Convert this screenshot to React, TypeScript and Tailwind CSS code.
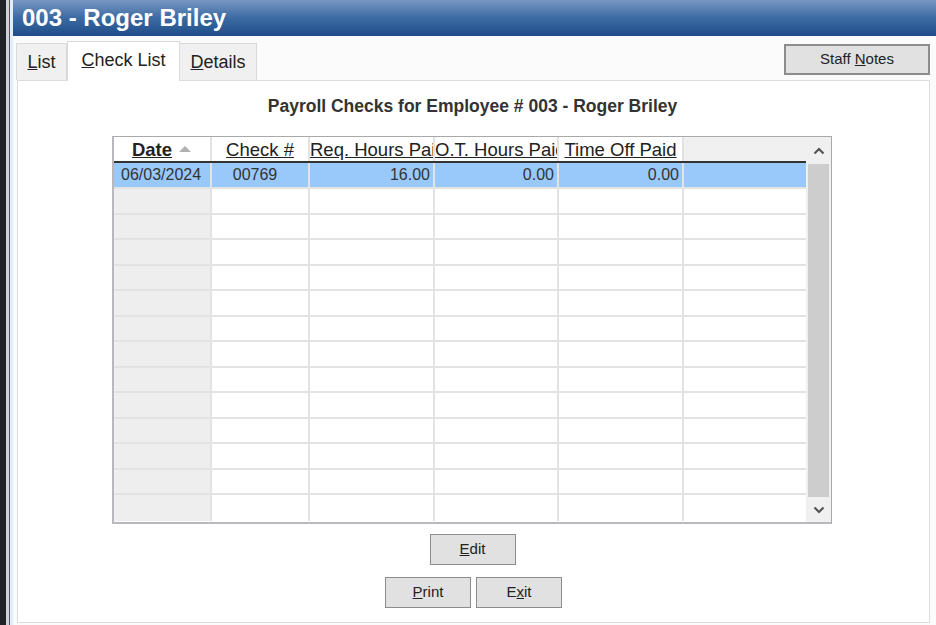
import React from 'react';

const cols = [
  { key: 'date', label: 'Date', w: 'w-[98px]', bold: true, sort: true },
  { key: 'check', label: 'Check #', w: 'w-[98px]' },
  { key: 'req', label: 'Req. Hours Paid', w: 'w-[125px]' },
  { key: 'ot', label: 'O.T. Hours Paid', w: 'w-[124px]' },
  { key: 'off', label: 'Time Off Paid', w: 'w-[125px]' },
];

const emptyRows = Array.from({ length: 13 });

function Btn({ children, className = '' }: { children: React.ReactNode; className?: string }) {
  return (
    <button
      className={`h-[31px] w-[86px] bg-[#e1e1e1] border border-[#8c8c8c] text-[15px] text-[#222] ${className}`}
    >
      {children}
    </button>
  );
}

export default function App() {
  return (
    <div
      className="w-[936px] h-[625px] flex overflow-hidden bg-white"
      style={{ fontFamily: '"Liberation Sans", Arial, sans-serif' }}
    >
      {/* window edge on the left */}
      <div className="w-[6px] bg-[#1f2327]" />
      <div className="w-[3px] bg-[#cfd2d6]" />
      <div className="w-px bg-[#4b5563]" />
      <div className="w-[3px] bg-[#e6edf6]" />

      <div className="flex-1 flex flex-col">
        <div className="h-[36px] shrink-0 bg-gradient-to-b from-[#7898c2] via-[#3c6aa2] to-[#1e4d88] flex items-center pl-[9px]">
          <span className="text-white font-bold text-[24px]">003 - Roger Briley</span>
        </div>

        <div className="flex-1 flex flex-col bg-[#fbfbfb] pl-[3px] pr-[6px]">
          {/* tabs row */}
          <div className="h-[44px] shrink-0 flex items-end relative">
            <div className="h-[37px] w-[51px] bg-[#f0f0f0] border border-b-0 border-[#d9d9d9] flex items-center justify-center text-[18px] text-[#222]">
              <span><u>L</u>ist</span>
            </div>
            <div className="h-[40px] w-[113px] bg-white border border-b-0 border-[#d9d9d9] flex items-center justify-center text-[18px] text-[#222] -mb-px z-10 pb-[3px]">
              <span><u>C</u>heck List</span>
            </div>
            <div className="h-[37px] w-[77px] bg-[#f0f0f0] border border-b-0 border-l-0 border-[#d9d9d9] flex items-center justify-center text-[18px] text-[#222]">
              <span><u>D</u>etails</span>
            </div>
            <div className="flex-1" />
            <button className="self-start mt-[8px] h-[31px] w-[146px] bg-[#e1e1e1] border-2 border-[#8c8c8c] text-[15px] text-[#222]">
              Staff <u>N</u>otes
            </button>
          </div>

          {/* panel */}
          <div className="flex-1 ml-px mb-[2px] bg-white border border-[#dcdcdc] flex flex-col">
            <div className="text-center font-bold text-[17.5px] leading-[26px] text-[#333] mt-[12px] mr-[2px]">
              Payroll Checks for Employee # 003 - Roger Briley
            </div>

            <div className="ml-[94px] mt-[17px] w-[720px] h-[388px] border border-[#a9a9a9] border-l-2 border-b-2 border-l-[#b8b8bf] border-b-[#b8b8bf] flex">
              <div className="flex-1 flex flex-col">
                {/* header */}
                <div className="h-[26px] flex border-b-2 border-[#333]">
                  {cols.map((c) => (
                    <div
                      key={c.key}
                      className={`${c.w} shrink-0 bg-white border-r-2 border-[#e2e2e2] overflow-hidden whitespace-nowrap text-center text-[18.5px] leading-[25px] text-[#222] ${c.bold ? 'font-bold' : ''}`}
                    >
                      <span className="underline">{c.label}</span>
                      {c.sort && (
                        <svg width="14" height="8" viewBox="0 0 14 8" className="inline-block ml-[6px] align-middle -mt-[4px]">
                          <path d="M1 7 L7 1 L13 7 Z" fill="#b0b0b0" />
                        </svg>
                      )}
                    </div>
                  ))}
                  <div className="flex-1 bg-[#f0f0f0]" />
                </div>

                {/* selected row */}
                <div className="h-[26px] flex bg-[#99c8fb] border-b-2 border-[#e3e3e3] text-[16px] text-[#333]">
                  <div className="w-[98px] shrink-0 border-r-2 border-[#e3e3e3] flex items-center pl-[7px]">06/03/2024</div>
                  <div className="w-[98px] shrink-0 border-r-2 border-[#e3e3e3] flex items-center justify-center pr-[10px]">00769</div>
                  <div className="w-[125px] shrink-0 border-r-2 border-[#e3e3e3] flex items-center justify-end pr-[3px]">16.00</div>
                  <div className="w-[124px] shrink-0 border-r-2 border-[#e3e3e3] flex items-center justify-end pr-[3px]">0.00</div>
                  <div className="w-[125px] shrink-0 border-r-2 border-[#e3e3e3] flex items-center justify-end pr-[3px]">0.00</div>
                  <div className="flex-1" />
                </div>

                {emptyRows.map((_, i) => (
                  <div key={i} className="h-[25.5px] flex border-b-2 border-[#e3e3e3] last:border-b-0">
                    <div className="w-[98px] shrink-0 bg-[#eeeeee] border-r-2 border-[#e3e3e3]" />
                    <div className="w-[98px] shrink-0 border-r-2 border-[#e3e3e3]" />
                    <div className="w-[125px] shrink-0 border-r-2 border-[#e3e3e3]" />
                    <div className="w-[124px] shrink-0 border-r-2 border-[#e3e3e3]" />
                    <div className="w-[125px] shrink-0 border-r-2 border-[#e3e3e3]" />
                    <div className="flex-1" />
                  </div>
                ))}
              </div>

              {/* scrollbar */}
              <div className="w-[25px] bg-[#f0f0f0] flex flex-col items-center">
                <div className="h-[27px] w-full flex items-center justify-center">
                  <svg width="12" height="8" viewBox="0 0 12 8">
                    <path d="M1.5 6.5 L6 2 L10.5 6.5" fill="none" stroke="#555" strokeWidth="2.2" />
                  </svg>
                </div>
                <div className="flex-1 w-[21px] bg-[#cdcdcd]" />
                <div className="h-[25px] w-full flex items-center justify-center">
                  <svg width="12" height="8" viewBox="0 0 12 8">
                    <path d="M1.5 1.5 L6 6 L10.5 1.5" fill="none" stroke="#555" strokeWidth="2.2" />
                  </svg>
                </div>
              </div>
            </div>

            <div className="flex justify-center mt-[10px] mr-[2px]">
              <Btn><u>E</u>dit</Btn>
            </div>
            <div className="flex justify-center gap-[5px] mt-[12px]">
              <Btn><u>P</u>rint</Btn>
              <Btn>E<u>x</u>it</Btn>
            </div>
          </div>
        </div>
      </div>
    </div>
  );
}
